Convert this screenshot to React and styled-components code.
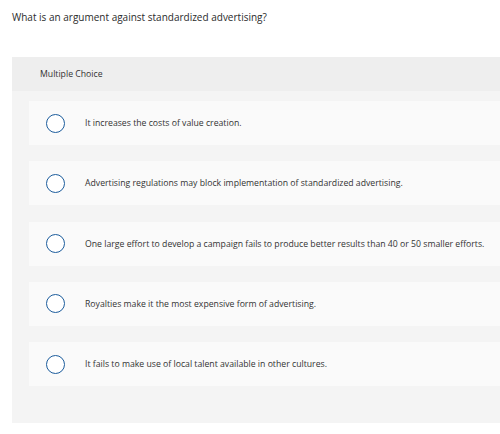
import React from "react";
import styled, { createGlobalStyle } from "styled-components";

const Global = createGlobalStyle`
  html, body { margin: 0; padding: 0; background: #ffffff; }
  body { font-family: "Open Sans", "Liberation Sans", sans-serif; color: #333333; }
`;

const Page = styled.div`
  width: 500px;
  height: 434px;
  padding-left: 12px;
  box-sizing: border-box;
  overflow: hidden;
`;

const Question = styled.div`
  padding-top: 11px;
  font-size: 10px;
  line-height: 12px;
  color: #2b2b2b;
`;

const Panel = styled.section`
  margin-top: 34px;
  background: #f4f4f4;
  padding-bottom: 37px;
`;

const Header = styled.div`
  height: 34px;
  display: flex;
  align-items: center;
  padding-left: 28px;
  background: #eeeeee;
  font-size: 8.7px;
  color: #333333;
`;

const List = styled.div`
  display: flex;
  flex-direction: column;
  gap: 16.25px;
  padding: 10px 0 0 17px;
`;

const Option = styled.label`
  height: 44px;
  display: flex;
  align-items: center;
  background: #fafafa;
  padding-left: 17px;
  cursor: pointer;
`;

const Radio = styled.span`
  width: 19px;
  height: 19px;
  box-sizing: border-box;
  border: 1.5px solid #1b5c9c;
  border-radius: 50%;
  flex-shrink: 0;
  background: #ffffff;
`;

const OptionText = styled.span`
  margin-left: 20px;
  font-size: 8.7px;
  color: #333333;
  white-space: nowrap;
`;

const options = [
  "It increases the costs of value creation.",
  "Advertising regulations may block implementation of standardized advertising.",
  "One large effort to develop a campaign fails to produce better results than 40 or 50 smaller efforts.",
  "Royalties make it the most expensive form of advertising.",
  "It fails to make use of local talent available in other cultures.",
];

export default function App() {
  return (
    <>
      <Global />
      <Page>
        <Question>What is an argument against standardized advertising?</Question>
        <Panel>
          <Header>Multiple Choice</Header>
          <List>
            {options.map((o) => (
              <Option key={o}>
                <Radio />
                <OptionText>{o}</OptionText>
              </Option>
            ))}
          </List>
        </Panel>
      </Page>
    </>
  );
}
